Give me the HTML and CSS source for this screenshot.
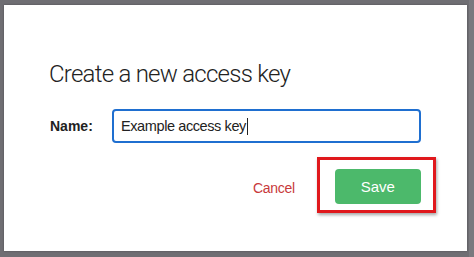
FILE: index.html
```html
<!DOCTYPE html>
<html>
<head>
<meta charset="utf-8">
<link rel="stylesheet" href="styles.css">
</head>
<body>
<div class="screen">
  <div class="dialog">
    <h1 class="title">Create a new access key</h1>
    <div class="field">
      <label class="label">Name:</label>
      <div class="input"><span class="value">Example access key</span><span class="caret"></span></div>
    </div>
    <div class="actions">
      <span class="cancel">Cancel</span>
      <div class="highlight">
        <span class="save">Save</span>
      </div>
    </div>
  </div>
  <div class="edge"></div>
</div>
</body>
</html>
```
FILE: styles.css
```css
html, body {
  margin: 0;
  padding: 0;
  background: #6f6e73;
  width: 474px;
  height: 257px;
  overflow: hidden;
}
.screen {
  display: flex;
  padding: 5px 0 0 4px;
  height: 252px;
  position: relative;
}
.dialog {
  width: 463px;
  height: 246px;
  background: #ffffff;
  box-sizing: border-box;
  padding: 54px 0 0 45px;
  font-family: "Liberation Sans", Arial, sans-serif;
  box-shadow: 0 0 2px rgba(0,0,0,0.3);
}
.title {
  margin: 0;
  font-family: Roboto, "Liberation Sans", sans-serif;
  font-weight: 300;
  font-size: 24px;
  line-height: 30px;
  color: #222;
  letter-spacing: -0.75px;
}
.field {
  display: flex;
  align-items: center;
  margin-top: 20px;
}
.label {
  font-weight: bold;
  font-size: 14px;
  color: #222;
  width: 63px;
  padding-left: 1px;
  box-sizing: border-box;
}
.input {
  width: 309px;
  height: 34px;
  box-sizing: border-box;
  border: 2px solid #1f6fd0;
  border-radius: 4px;
  display: flex;
  align-items: center;
  padding-left: 7px;
  font-size: 14.5px;
  letter-spacing: -0.4px;
  color: #222;
}
.caret {
  display: inline-block;
  width: 1px;
  height: 17px;
  background: #222;
  margin-left: 1px;
}
.actions {
  display: flex;
  align-items: center;
  margin-top: 14px;
  padding-left: 204px;
}
.cancel {
  color: #c8393b;
  font-size: 14px;
  letter-spacing: -0.3px;
  margin-right: 22px;
  padding-top: 5px;
}
.highlight {
  width: 119px;
  height: 56px;
  box-sizing: border-box;
  border: 3px solid #e0181c;
  box-shadow: 1px 2px 3px rgba(0,0,0,0.35);
  padding: 9px 0 0 15px;
}
.save {
  display: flex;
  align-items: center;
  justify-content: center;
  width: 86px;
  height: 35px;
  background: #4cb96b;
  border-radius: 4px;
  color: #ffffff;
  font-size: 15px;
}
.edge {
  position: absolute;
  right: 0;
  top: 0;
  width: 5px;
  height: 257px;
  background: #7a797e;
}
```
